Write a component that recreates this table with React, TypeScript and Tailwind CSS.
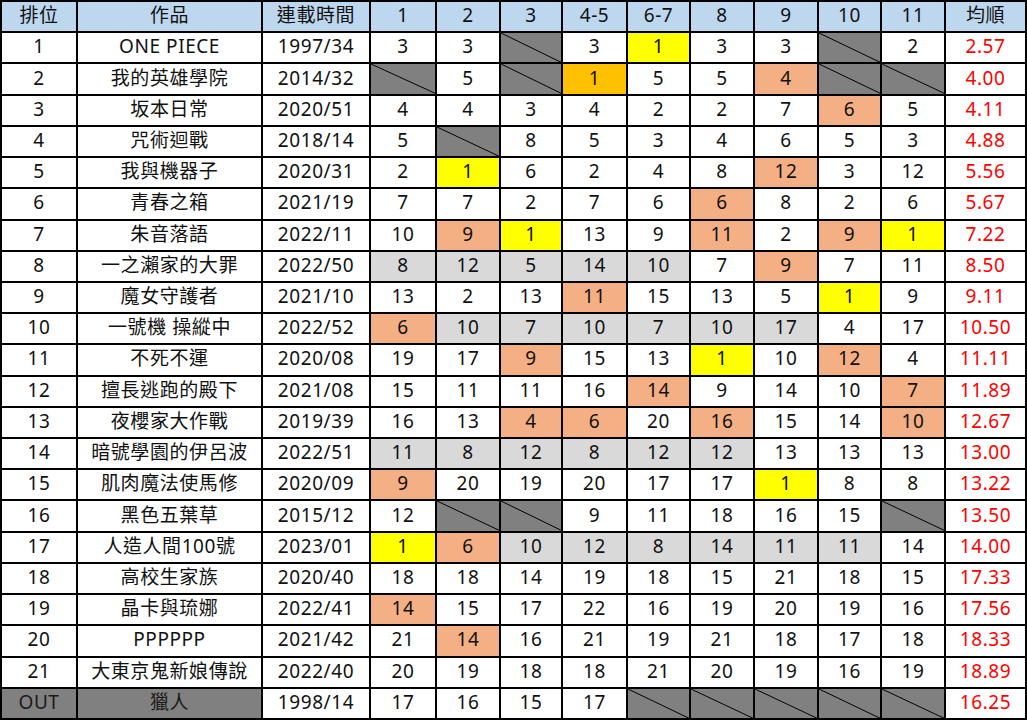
import React from "react";

type Cell = string | number | null;

// X = 未刊登 (斜線)
const X = null;

const COLS = ["1", "2", "3", "4-5", "6-7", "8", "9", "10", "11"];

const bgClass: Record<string, string> = {
	y: "bg-[#ffff00]",
	o: "bg-[#ffc000]",
	s: "bg-[#f4b084]",
	g: "bg-[#d9d9d9]",
};

const cell = "flex items-center justify-center pb-[2px]";

// value with optional colour suffix, e.g. "1y", "9s"
const rows: { rank: string; title: string; since: string; ranks: Cell[]; avg: string }[] = [
	{ rank: "1", title: "ONE PIECE", since: "1997/34", ranks: [3, 3, X, 3, "1y", 3, 3, X, 2], avg: "2.57" },
	{ rank: "2", title: "我的英雄學院", since: "2014/32", ranks: [X, 5, X, "1o", 5, 5, "4s", X, X], avg: "4.00" },
	{ rank: "3", title: "坂本日常", since: "2020/51", ranks: [4, 4, 3, 4, 2, 2, 7, "6s", 5], avg: "4.11" },
	{ rank: "4", title: "咒術迴戰", since: "2018/14", ranks: [5, X, 8, 5, 3, 4, 6, 5, 3], avg: "4.88" },
	{ rank: "5", title: "我與機器子", since: "2020/31", ranks: [2, "1y", 6, 2, 4, 8, "12s", 3, 12], avg: "5.56" },
	{ rank: "6", title: "青春之箱", since: "2021/19", ranks: [7, 7, 2, 7, 6, "6s", 8, 2, 6], avg: "5.67" },
	{ rank: "7", title: "朱音落語", since: "2022/11", ranks: [10, "9s", "1y", 13, 9, "11s", 2, "9s", "1y"], avg: "7.22" },
	{ rank: "8", title: "一之瀨家的大罪", since: "2022/50", ranks: ["8g", "12g", "5g", "14g", "10g", 7, "9s", 7, 11], avg: "8.50" },
	{ rank: "9", title: "魔女守護者", since: "2021/10", ranks: [13, 2, 13, "11s", 15, 13, 5, "1y", 9], avg: "9.11" },
	{ rank: "10", title: "一號機 操縱中", since: "2022/52", ranks: ["6s", "10g", "7g", "10g", "7g", "10g", "17g", 4, 17], avg: "10.50" },
	{ rank: "11", title: "不死不運", since: "2020/08", ranks: [19, 17, "9s", 15, 13, "1y", 10, "12s", 4], avg: "11.11" },
	{ rank: "12", title: "擅長逃跑的殿下", since: "2021/08", ranks: [15, 11, 11, 16, "14s", 9, 14, 10, "7s"], avg: "11.89" },
	{ rank: "13", title: "夜櫻家大作戰", since: "2019/39", ranks: [16, 13, "4s", "6s", 20, "16s", 15, 14, "10s"], avg: "12.67" },
	{ rank: "14", title: "暗號學園的伊呂波", since: "2022/51", ranks: ["11g", "8g", "12g", "8g", "12g", "12g", 13, 13, 13], avg: "13.00" },
	{ rank: "15", title: "肌肉魔法使馬修", since: "2020/09", ranks: ["9s", 20, 19, 20, 17, 17, "1y", 8, 8], avg: "13.22" },
	{ rank: "16", title: "黑色五葉草", since: "2015/12", ranks: [12, X, X, 9, 11, 18, 16, 15, X], avg: "13.50" },
	{ rank: "17", title: "人造人間100號", since: "2023/01", ranks: ["1y", "6s", "10g", "12g", "8g", "14g", "11g", "11g", 14], avg: "14.00" },
	{ rank: "18", title: "高校生家族", since: "2020/40", ranks: [18, 18, 14, 19, 18, 15, 21, 18, 15], avg: "17.33" },
	{ rank: "19", title: "晶卡與琉娜", since: "2022/41", ranks: ["14s", 15, 17, 22, 16, 19, 20, 19, 16], avg: "17.56" },
	{ rank: "20", title: "PPPPPP", since: "2021/42", ranks: [21, "14s", 16, 21, 19, 21, 18, 17, 18], avg: "18.33" },
	{ rank: "21", title: "大東京鬼新娘傳說", since: "2022/40", ranks: [20, 19, 18, 18, 21, 20, 19, 16, 19], avg: "18.89" },
];

const Slash = () => (
	<div className="relative h-full w-full bg-[#808080]">
		<svg className="absolute inset-0 h-full w-full" viewBox="0 0 100 100" preserveAspectRatio="none">
			<line x1="0" y1="0" x2="100" y2="100" stroke="#000" strokeWidth="1" vectorEffect="non-scaling-stroke" />
		</svg>
	</div>
);

const RankCell = ({ value }: { value: Cell }) => {
	if (value === null) return <Slash />;
	const s = String(value);
	const m = s.match(/^(\d+)([a-z])?$/);
	const num = m ? m[1] : s;
	const color = m && m[2] ? bgClass[m[2]] : "bg-white";
	return <div className={`${cell} ${color}`}>{num}</div>;
};

export default function App() {
	return (
		<div
			className="w-[1027px] h-[720px] bg-black p-[2px] text-[19px] tracking-[0.03em] text-[#111] leading-none"
			style={{ fontFamily: '"Noto Sans", "Noto Sans CJK TC", sans-serif' }}
		>
			<div className="grid h-full grid-cols-[74px_183px_106px_64px_62px_60px_63px_61px_62px_62px_61px_62px_79px] grid-rows-[repeat(23,minmax(0,1fr))] gap-[2px]">
				{/* header */}
				{["排位", "作品", "連載時間", ...COLS, "均順"].map((h) => (
					<div key={h} className={`${cell} bg-[#bdd7ee]`}>
						{h}
					</div>
				))}

				{rows.map((r) => (
					<React.Fragment key={r.rank}>
						<div className={`${cell} bg-white`}>{r.rank}</div>
						<div className={`${cell} bg-white`}>{r.title}</div>
						<div className={`${cell} bg-white`}>{r.since}</div>
						{r.ranks.map((v, i) => (
							<RankCell key={i} value={v} />
						))}
						<div className={`${cell} bg-white text-[#ff0000]`}>{r.avg}</div>
					</React.Fragment>
				))}

				{/* 完結 / 休刊 */}
				<div className={`${cell} bg-[#808080] text-[#1a1a1a]`}>OUT</div>
				<div className={`${cell} bg-[#808080] text-[#1a1a1a]`}>獵人</div>
				<div className={`${cell} bg-white`}>1998/14</div>
				{[17, 16, 15, 17, X, X, X, X, X].map((v, i) => (
					<RankCell key={i} value={v} />
				))}
				<div className={`${cell} bg-white text-[#ff0000]`}>16.25</div>
			</div>
		</div>
	);
}
